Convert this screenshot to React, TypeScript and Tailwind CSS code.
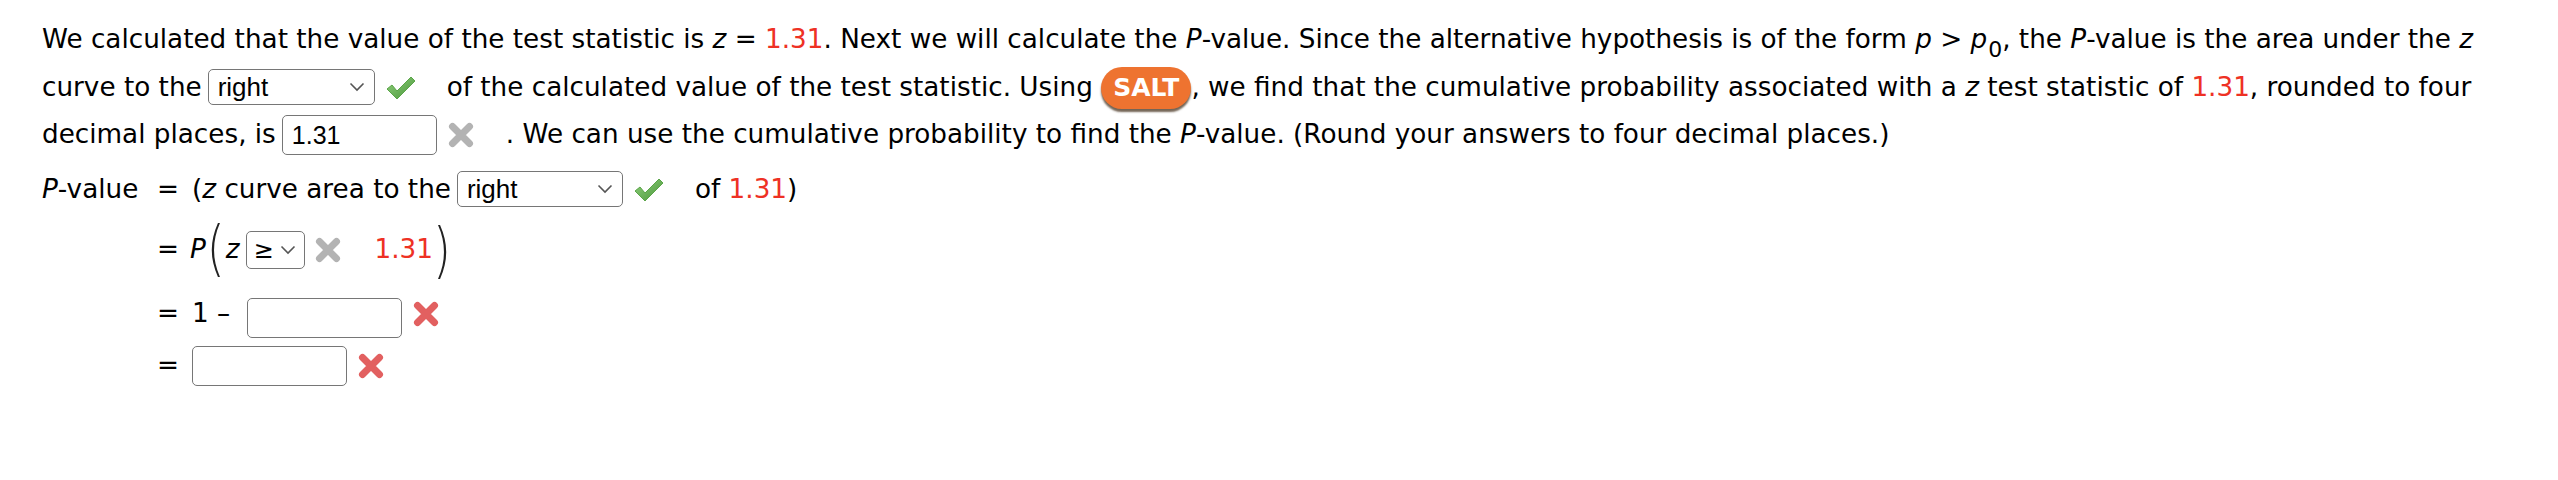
import React from "react";

const RED = "text-[#ee3124]";

function Chevron() {
  return (
    <svg width="16" height="10" viewBox="0 0 16 10" className="shrink-0">
      <path d="M1.5 1.5 L8 8 L14.5 1.5" fill="none" stroke="#555" strokeWidth="1.6" />
    </svg>
  );
}

function Select({ value, w }: { value: string; w: string }) {
  return (
    <span
      className={`inline-flex items-center justify-between h-[36px] ${w} border-[1.5px] border-[#767676] rounded-[5px] pl-[9px] pr-[9px] bg-white`}
      style={{ fontFamily: '"Liberation Sans", Arial, sans-serif' }}
    >
      <span className="text-[26px] text-black leading-none">{value}</span>
      <Chevron />
    </span>
  );
}

function InputBox({ value, w }: { value?: string; w: string }) {
  return (
    <span
      className={`inline-flex items-center h-[40px] ${w} border-[1.5px] border-[#767676] rounded-[5px] pl-[9px] bg-white`}
      style={{ fontFamily: '"Liberation Sans", Arial, sans-serif' }}
    >
      <span className="text-[25px] text-black leading-none">{value}</span>
    </span>
  );
}

function Check() {
  return (
    <svg width="32" height="28" viewBox="0 0 32 28" className="shrink-0">
      <defs>
        <linearGradient id="cg" x1="0" y1="0" x2="1" y2="1">
          <stop offset="0" stopColor="#8fd07c" />
          <stop offset="1" stopColor="#4a953a" />
        </linearGradient>
      </defs>
      <path
        d="M2 15 L7 11 L12 17 L26 3 L30 7 L12 25 Z"
        fill="url(#cg)"
        stroke="#5aa548"
        strokeWidth="1"
        strokeLinejoin="round"
      />
    </svg>
  );
}

function Cross({ color }: { color: string }) {
  return (
    <svg width="26" height="26" viewBox="0 0 26 26" className="shrink-0">
      <path d="M4.5 4.5 L21.5 21.5 M21.5 4.5 L4.5 21.5" stroke={color} strokeWidth="7" strokeLinecap="round" />
    </svg>
  );
}

function BigParen({ ch }: { ch: string }) {
  return (
    <span
      className="inline-block text-[46px] font-extralight scale-y-[1.3] leading-none text-[#222]"
      style={{ fontFamily: '"DejaVu Sans", sans-serif' }}
    >
      {ch}
    </span>
  );
}

export default function App() {
  return (
    <div
      className="w-[2558px] h-[480px] bg-white text-black text-[26.25px] overflow-hidden"
      style={{ fontFamily: '"DejaVu Sans", Verdana, sans-serif' }}
    >
      <div className="pl-[42px] pt-[16px]">
        {/* Line 1 */}
        <div className="h-[48px] flex items-center whitespace-pre">
          <span>We calculated that the value of the test statistic is </span>
          <i>z</i>
          <span> = </span>
          <span className={RED}>1.31</span>
          <span>. Next we will calculate the </span>
          <i>P</i>
          <span>-value. Since the alternative hypothesis is of the form </span>
          <i>p</i>
          <span> &gt; </span>
          <span>
            <i>p</i>
            <span className="relative top-[9px] text-[22px] ml-[1px]">0</span>,
          </span>
          <span> the </span>
          <i>P</i>
          <span>-value is the area under the </span>
          <i>z</i>
        </div>
        {/* Line 2 */}
        <div className="h-[48px] flex items-center whitespace-pre">
          <span>curve to the</span>
          <span className="ml-[6px]">
            <Select value="right" w="w-[167px]" />
          </span>
          <span className="ml-[10px]">
            <Check />
          </span>
          <span className="ml-[30px]">of the calculated value of the test statistic. Using </span>
          <span className="inline-flex items-center justify-center h-[42px] px-[12px] rounded-full bg-[#ee7330] text-white font-bold text-[25px] shadow-[0_3px_2px_rgba(70,50,30,0.75)]">
            SALT
          </span>
          <span>, we find that the cumulative probability associated with a </span>
          <i>z</i>
          <span> test statistic of </span>
          <span className={RED}>1.31</span>
          <span>, rounded to four</span>
        </div>
        {/* Line 3 */}
        <div className="h-[46px] flex items-center whitespace-pre">
          <span>decimal places, is</span>
          <span className="ml-[6px]">
            <InputBox value="1.31" w="w-[155px]" />
          </span>
          <span className="ml-[11px]">
            <Cross color="#b3b3b3" />
          </span>
          <span className="ml-[32px]">. We can use the cumulative probability to find the </span>
          <i>P</i>
          <span>-value. (Round your answers to four decimal places.)</span>
        </div>
      </div>

      {/* Equation block */}
      <div className="pl-[42px] mt-[12px] flex flex-col">
        <div className="h-[40px] flex items-center whitespace-pre">
          <span className="w-[115px]">
            <i>P</i>-value
          </span>
          <span className="w-[35px]">=</span>
          <span>(</span>
          <i>z</i>
          <span> curve area to the</span>
          <span className="ml-[6px]">
            <Select value="right" w="w-[166px]" />
          </span>
          <span className="ml-[10px]">
            <Check />
          </span>
          <span className="ml-[30px]">of </span>
          <span className={RED}>1.31</span>
          <span>)</span>
        </div>
        <div className="h-[64px] mt-[8px] flex items-center whitespace-pre">
          <span className="w-[115px]" />
          <span className="w-[33px]">=</span>
          <i>P</i>
          <span className="ml-[1px]">
            <BigParen ch="(" />
          </span>
          <i className="ml-[1px]">z</i>
          <span className="ml-[6px] inline-flex items-center justify-between h-[38px] w-[59px] border-[1.5px] border-[#767676] rounded-[5px] pl-[7px] pr-[8px]">
            <span className="text-[24px] leading-none">≥</span>
            <Chevron />
          </span>
          <span className="ml-[10px]">
            <Cross color="#b3b3b3" />
          </span>
          <span className={`ml-[34px] ${RED}`}>1.31</span>
          <BigParen ch=")" />
        </div>
        <div className="h-[52px] mt-[6px] flex items-center whitespace-pre">
          <span className="w-[115px]" />
          <span className="w-[35px]">=</span>
          <span>1 – </span>
          <span className="ml-[8px]">
            <InputBox w="w-[155px]" />
          </span>
          <span className="ml-[11px]">
            <Cross color="#e26060" />
          </span>
        </div>
        <div className="h-[52px] flex items-center whitespace-pre">
          <span className="w-[115px]" />
          <span className="w-[35px]">=</span>
          <InputBox w="w-[155px]" />
          <span className="ml-[11px]">
            <Cross color="#e26060" />
          </span>
        </div>
      </div>
    </div>
  );
}
